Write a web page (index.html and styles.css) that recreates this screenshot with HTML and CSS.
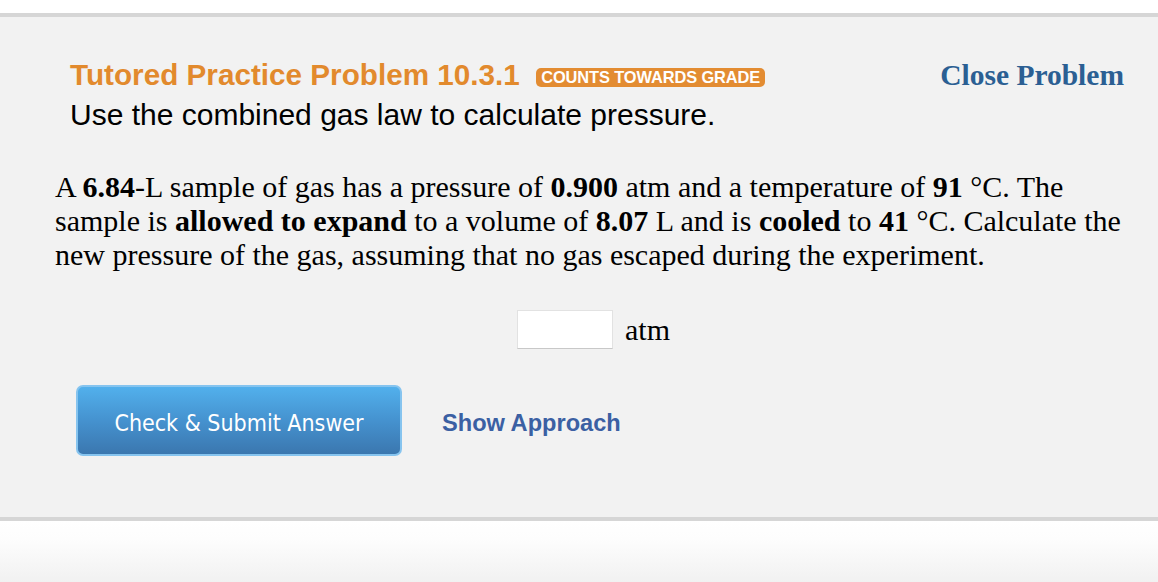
FILE: index.html
```html
<!DOCTYPE html>
<html lang="en">
<head>
<meta charset="utf-8">
<title>Tutored Practice Problem 10.3.1</title>
<link rel="stylesheet" href="styles.css">
</head>
<body>
<div class="top-gap"></div>
<section class="panel">
  <header class="head">
    <div class="head-text">
      <h1 class="title">Tutored Practice Problem 10.3.1 <span class="badge">COUNTS TOWARDS GRADE</span></h1>
      <p class="subtitle">Use the combined gas law to calculate pressure.</p>
    </div>
    <a class="close" href="#">Close Problem</a>
  </header>
  <p class="question">A <b>6.84</b>-L sample of gas has a pressure of <b>0.900</b> atm and a temperature of <b>91</b> °C. The sample is <b>allowed to expand</b> to a volume of <b>8.07</b> L and is <b>cooled</b> to <b>41</b> °C. Calculate the new pressure of the gas, assuming that no gas escaped during the experiment.</p>
  <div class="answer-row">
    <input class="answer" type="text" aria-label="answer">
    <span class="unit">atm</span>
  </div>
  <div class="actions">
    <button class="submit" type="button">Check &amp; Submit Answer</button>
    <a class="approach" href="#">Show Approach</a>
  </div>
</section>
<div class="foot"></div>
</body>
</html>
```
FILE: styles.css
```css
html, body {
  margin: 0;
  padding: 0;
  background: #ffffff;
}
.top-gap {
  height: 13px;
}
.panel {
  background: #f2f2f2;
  border-top: 4px solid #d6d6d6;
  border-bottom: 4px solid #d6d6d6;
  height: 500px;
  box-sizing: content-box;
  padding: 0 23px 0 55px;
}
.head {
  display: flex;
  justify-content: space-between;
  align-items: flex-start;
  padding: 40px 11px 0 15px;
}
.title {
  margin: 0;
  font-family: "Liberation Sans", Arial, sans-serif;
  font-weight: bold;
  font-size: 29.7px;
  line-height: 36px;
  color: #e28a2d;
}
.badge {
  display: inline-block;
  vertical-align: 2px;
  margin-left: 8px;
  background: #e38c32;
  color: #ffffff;
  font-size: 16.4px;
  line-height: 19px;
  padding: 0 5px;
  border-radius: 5px;
  letter-spacing: -0.1px;
}
.subtitle {
  margin: 4px 0 0;
  font-family: "Liberation Sans", Arial, sans-serif;
  font-size: 30px;
  line-height: 36px;
  color: #000000;
}
.close {
  font-family: "Liberation Serif", "Times New Roman", serif;
  font-weight: bold;
  font-size: 29.5px;
  line-height: 36px;
  color: #2b5f93;
  text-decoration: none;
}
.question {
  margin: 37px 0 0;
  font-family: "Liberation Serif", "Times New Roman", serif;
  font-size: 30px;
  line-height: 34px;
  color: #000000;
}
.answer-row {
  display: flex;
  justify-content: center;
  align-items: center;
  gap: 12px;
  margin-top: 38px;
  padding-left: 0;
  padding-right: 3px;
}
.answer {
  width: 96px;
  height: 39px;
  box-sizing: border-box;
  margin: 0;
  background: #ffffff;
  border: 1px solid #e2e2e2;
  border-bottom-color: #c8c8c8;
  border-radius: 0;
  padding: 0 6px;
}
.unit {
  font-family: "Liberation Serif", "Times New Roman", serif;
  font-size: 30px;
  line-height: 34px;
  color: #000000;
}
.actions {
  display: flex;
  align-items: center;
  gap: 40px;
  margin-top: 36px;
  padding-left: 21px;
}
.submit {
  width: 326px;
  height: 71px;
  box-sizing: border-box;
  border: 2px solid #86c4ef;
  border-radius: 7px;
  background: linear-gradient(to bottom, #52b0ec 0%, #4592cf 50%, #3b77af 100%);
  color: #ffffff;
  font-family: "DejaVu Sans Condensed", "DejaVu Sans", sans-serif;
  font-stretch: condensed;
  font-size: 23px;
  padding: 5px 0 0;
  cursor: pointer;
}
.approach {
  font-family: "Liberation Sans", Arial, sans-serif;
  font-weight: bold;
  font-size: 23.6px;
  color: #3b60a3;
  text-decoration: none;
  padding-top: 5px;
}
.foot {
  height: 61px;
  background: linear-gradient(to bottom, #ffffff 0%, #fdfdfd 30%, #f1f1f1 100%);
}
```
